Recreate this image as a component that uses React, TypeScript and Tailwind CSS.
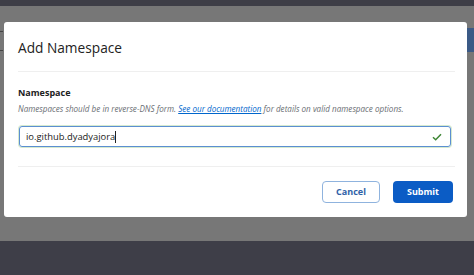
import React from "react";

export default function App() {
  return (
    <div
      className="relative w-[474px] h-[275px] overflow-hidden flex flex-col"
      style={{ fontFamily: '"Open Sans", "Liberation Sans", sans-serif' }}
    >
      <div className="h-[6px] bg-[#3e3e47]" />
      <div className="h-[235px] bg-[#777777] relative">
        <div className="absolute left-0 top-[25px] w-[3px] h-[1px] bg-[#444]" />
        <div className="absolute left-0 top-[44px] w-[3px] h-[1px] bg-[#444]" />
        <div className="absolute left-[467px] top-[22px] w-[7px] h-[24px] bg-[#3b5a86]" />
      </div>
      <div className="flex-1 bg-[#3e3e48]" />

      <div className="absolute left-[4px] top-[22px] w-[463px] h-[195px] bg-white rounded-[3px] flex flex-col px-[14px]">
        <h1 className="pt-[16px] text-[13.7px] leading-[19px] text-[#222] font-normal">Add Namespace</h1>
        <div className="mt-[14px] h-[1px] bg-[#efefef] w-[437px]" />
        <div className="pt-[14px] text-[9px] leading-[13px] font-bold text-[#222]">Namespace</div>
        <div className="mt-[4px] text-[8.1px] leading-[12px] italic text-[#6a6e73] whitespace-nowrap">
          Namespaces should be in reverse-DNS form.{" "}
          <span className="text-[#0066cc] underline">See our documentation</span> for details on valid namespace options.
        </div>
        <div className="mt-[11px] ml-[1px] w-[432px] h-[21px] rounded-[3px] border border-[#5b8fd1] shadow-[0_0_0_1px_#d6ead0] flex items-center pl-[6px] pr-[8px]">
          <span className="text-[9.4px] text-[#222] leading-[14px]">io.github.dyadyajora</span>
          <span className="w-[1px] h-[12px] bg-[#222]" />
          <div className="flex-1" />
          <svg width="10" height="8" viewBox="0 0 10 8">
            <path d="M1 4.2 L3.7 6.8 L9 1.2" fill="none" stroke="#3e8635" strokeWidth="1.5" />
          </svg>
        </div>
        <div className="mt-[19px] h-[1px] bg-[#efefef] w-[437px]" />
        <div className="flex justify-end gap-[13px] mt-[14px]">
          <button className="w-[58px] h-[22px] rounded-[4px] border border-[#8fb3de] text-[#2f62a8] text-[9px] font-bold">Cancel</button>
          <button className="w-[60px] h-[22px] rounded-[4px] bg-[#0b5cc5] text-white text-[9px] font-bold">Submit</button>
        </div>
      </div>
    </div>
  );
}
